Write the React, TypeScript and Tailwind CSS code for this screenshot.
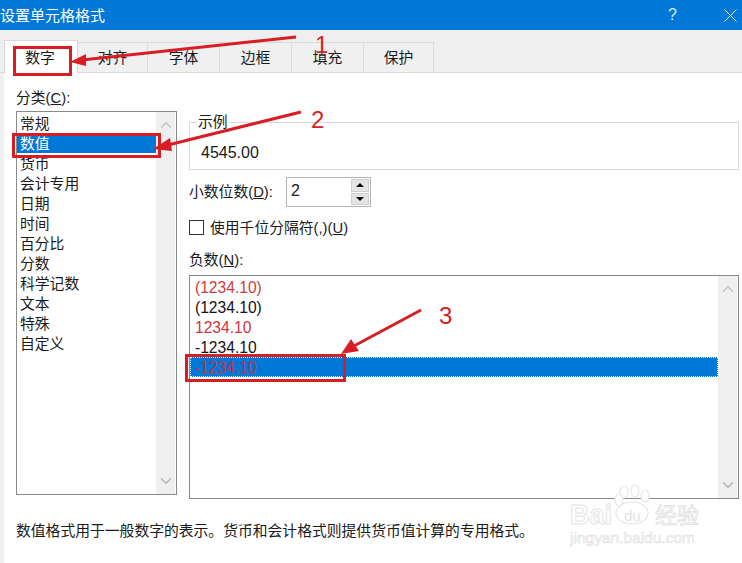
import React from 'react';
import { ChevronUp, ChevronDown } from 'lucide-react';

const tabs = [
    { label: '对齐', width: 'w-[70px]' },
    { label: '字体', width: 'w-[72px]' },
    { label: '边框', width: 'w-[72px]' },
    { label: '填充', width: 'w-[72px]' },
    { label: '保护', width: 'w-[70px]' },
];
const categories = ['常规', '数值', '货币', '会计专用', '日期', '时间', '百分比', '分数', '科学记数', '文本', '特殊', '自定义'];
const negatives = [
    { text: '(1234.10)', color: 'text-[#c8403c]' },
    { text: '(1234.10)', color: 'text-[#111]' },
    { text: '1234.10', color: 'text-[#d0343c]' },
    { text: '-1234.10', color: 'text-[#111]' },
];

const ScrollBar = () => (
    <div className="w-[19px] mr-[1px] shrink-0 bg-[#efefef] flex flex-col justify-between items-center py-[4px]">
        <ChevronUp size={18} className="text-[#c4c4c4]" />
        <ChevronDown size={18} className="text-[#b4b4b4]" />
    </div>
);

// the red marks drawn on top of the screenshot
const Annotations = () => (
    <svg className="absolute inset-0 pointer-events-none" width="742" height="563" viewBox="0 0 742 563">
        <g fill="none" stroke="#d81e24">
            <rect x="14.5" y="47.5" width="56" height="27" strokeWidth="3" />
            <rect x="13.5" y="134.5" width="146" height="22" strokeWidth="3" />
            <rect x="186.5" y="355.5" width="158" height="25" strokeWidth="3" />
            <path d="M296 37 L82 60" strokeWidth="3" />
            <path d="M301 112 L168 145" strokeWidth="3" />
            <path d="M421 310 L352 347" strokeWidth="3" />
        </g>
        <g fill="#d81e24">
            <polygon points="70,62 86,54 86,66" />
            <polygon points="153,149 170,138 172,151" />
            <polygon points="341,354 351,339 359,351" />
        </g>
    </svg>
);

const Watermark = () => (
    <div className="absolute left-[570px] top-[484px] w-[132px] h-[62px] leading-none">
        <svg className="absolute left-[42px] top-0" width="44" height="42" viewBox="0 0 44 42" fill="white" stroke="#e6e6e6" strokeWidth="1.2">
            <ellipse cx="12" cy="8" rx="4" ry="6" />
            <ellipse cx="23" cy="7" rx="4" ry="6" />
            <ellipse cx="33" cy="12" rx="4" ry="6" />
            <ellipse cx="7" cy="16" rx="4" ry="6" />
            <ellipse cx="20" cy="29" rx="16" ry="11" />
        </svg>
        <span className="absolute left-0 top-[18px] text-[27px] font-bold text-white [-webkit-text-stroke:1px_#e4e4e4]">Bai</span>
        <span className="absolute left-[54px] top-[24px] text-[15px] text-[#e2e2e2]">du</span>
        <span className="absolute left-[85px] top-[21px] text-[22px] text-white [-webkit-text-stroke:1px_#e4e4e4]">经验</span>
        <span className="absolute left-0 top-[46px] text-[15.5px] text-white [-webkit-text-stroke:0.7px_#e2e2e2]">jingyan.baidu.com</span>
    </div>
);

export default function App() {
    return (
        <div className="relative w-[742px] h-[563px] overflow-hidden bg-white text-[14.8px] text-[#1a1a1a] font-['Liberation_Sans','Noto_Sans_CJK_SC',sans-serif]">
            {/* Title bar */}
            <div className="h-[30px] bg-[#0078d7] flex items-center justify-between text-white">
                <span className="text-[15px] leading-none">设置单元格格式</span>
                <div className="flex items-center">
                    <span className="text-[16px] leading-none text-[#d8ecfa] mr-[47px]">?</span>
                    <svg width="13" height="13" viewBox="0 0 13 13" stroke="#e6f2fb" strokeWidth="1" className="mr-[5px]">
                        <path d="M0.5 0.5 L12.5 12.5 M12.5 0.5 L0.5 12.5" />
                    </svg>
                </div>
            </div>

            {/* Tab strip */}
            <div className="h-[43px] bg-[#efefef] border-b border-[#d9d9d9] pl-[4px] flex items-end">
                <div className="relative h-[33px] w-[74px] -mb-px bg-white border border-b-0 border-[#d9d9d9] flex items-center justify-center pr-[2px] pt-[3px]">
                    数字
                </div>
                {tabs.map(tab => (
                    <div key={tab.label} className={`h-[30px] ${tab.width} bg-[#f0f0f0] border-t border-r border-[#dadada] flex items-center justify-center pt-[2px]`}>
                        {tab.label}
                    </div>
                ))}
            </div>

            {/* Page body */}
            <div className="flex pl-[16px] pr-[3px] pt-[15px]">
                <div className="w-[161px] mr-[12px]">
                    <div className="h-[23px] leading-[20px]">
                        分类(<span className="underline">C</span>):
                    </div>
                    <div className="h-[384px] border border-[#8a8a8a] flex">
                        <ul className="flex-1 pt-[1px]">
                            {categories.map(c => (
                                <li
                                    key={c}
                                    className={`h-[20px] leading-[22px] pl-[3px] ${c === '数值' ? 'bg-[#0078d7] text-white' : ''}`}
                                >
                                    {c}
                                </li>
                            ))}
                        </ul>
                        <ScrollBar />
                    </div>
                </div>

                <div className="flex-1">
                    {/* Sample */}
                    <div className="relative h-[48px] mt-[34px] border border-[#d9d9d9] pl-[11px] pt-[20px] leading-[20px] text-[16px]">
                        <span className="absolute -top-[10px] left-[7px] bg-white px-[1px] leading-[18px] text-[14.8px]">示例</span>
                        4545.00
                    </div>

                    {/* Decimal places */}
                    <div className="flex items-center mt-[7px] h-[30px]">
                        <span className="w-[97px]">小数位数(<span className="underline">D</span>):</span>
                        <div className="w-[85px] h-[30px] border border-[#b4b4b4] flex justify-between">
                            <span className="pl-[4px] leading-[25px] text-[16px]">2</span>
                            <div className="w-[19px] flex flex-col gap-[1px] py-[1px] pr-[1px]">
                                <div className="flex-1 bg-[#e4e4e4] border border-[#d0d0d0] flex items-center justify-center">
                                    <div className="w-0 h-0 border-x-[4px] border-x-transparent border-b-[4px] border-b-black" />
                                </div>
                                <div className="flex-1 bg-[#e4e4e4] border border-[#d0d0d0] flex items-center justify-center">
                                    <div className="w-0 h-0 border-x-[4px] border-x-transparent border-t-[4px] border-t-black" />
                                </div>
                            </div>
                        </div>
                    </div>

                    {/* Thousands separator */}
                    <div className="flex items-center mt-[11px] h-[20px]">
                        <div className="w-[15px] h-[15px] border border-[#333] mr-[6px] -mt-[2px]" />
                        使用千位分隔符(,)(<span className="underline">U</span>)
                    </div>

                    {/* Negative numbers */}
                    <div className="mt-[12px] h-[20px] leading-[20px]">
                        负数(<span className="underline">N</span>):
                    </div>
                    <div className="mt-[5px] h-[224px] border border-[#8a8a8a] flex">
                        <ul className="flex-1 pt-[1px] text-[15.6px]">
                            {negatives.map((n, i) => (
                                <li key={i} className={`h-[20px] leading-[22px] pl-[5px] ${n.color}`}>
                                    {n.text}
                                </li>
                            ))}
                            <li className="h-[20px] leading-[20px] pl-[4px] bg-[#0078d7] text-[#c0304a] border border-dotted border-[#e8f0f8]">
                                -1234.10
                            </li>
                        </ul>
                        <ScrollBar />
                    </div>
                </div>
            </div>

            {/* Description */}
            <p className="pl-[16px] mt-[22px] leading-[20px]">
                数值格式用于一般数字的表示。货币和会计格式则提供货币值计算的专用格式。
            </p>

            <Annotations />

            {/* Annotation numbers */}
            <span className="absolute left-[315px] top-[33px] text-[24px] leading-none text-[#d81e24]">1</span>
            <span className="absolute left-[311px] top-[108px] text-[24px] leading-none text-[#d81e24]">2</span>
            <span className="absolute left-[439px] top-[304px] text-[24px] leading-none text-[#d81e24]">3</span>

            <Watermark />

            <div className="absolute left-0 top-[73px] bottom-0 w-[4px] bg-[#efefef]" />
        </div>
    );
}
